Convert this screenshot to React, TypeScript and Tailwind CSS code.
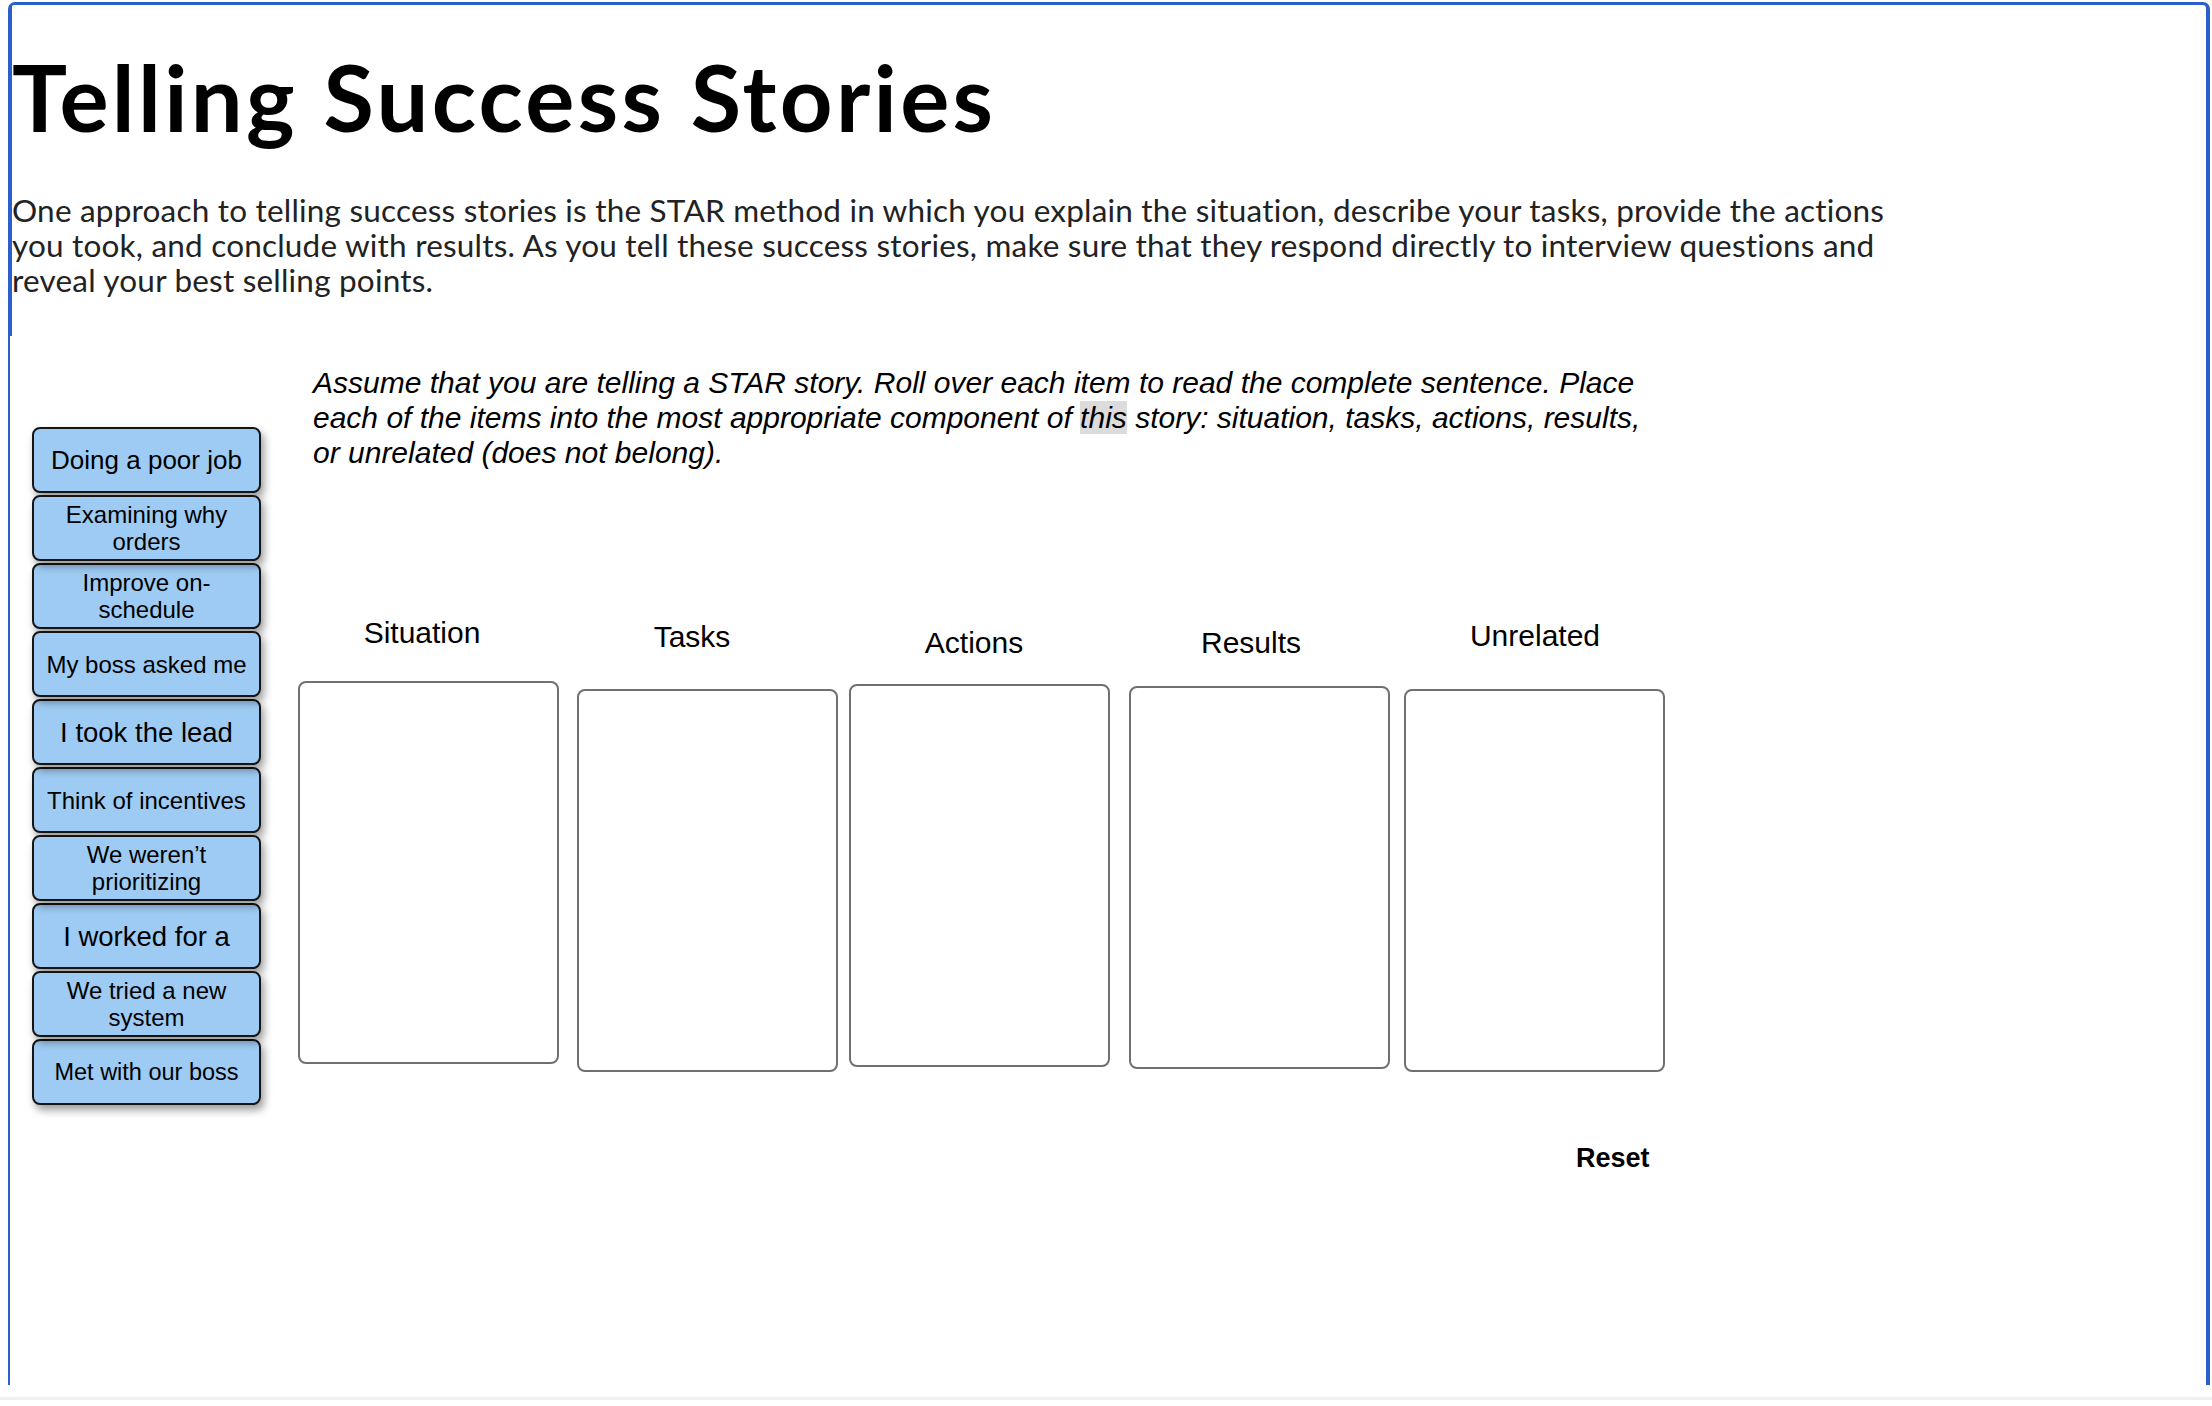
const items = [
  { text: "Doing a poor job", size: "text-[26px]", z: "z-[1]" },
  { text: "Examining why orders", size: "text-[24px]", z: "z-[2]" },
  { text: "Improve on-schedule", size: "text-[24px]", z: "z-[1]" },
  { text: "My boss asked me", size: "text-[24px]", z: "z-[3]" },
  { text: "I took the lead", size: "text-[27.5px]", z: "z-[2]" },
  { text: "Think of incentives", size: "text-[24px]", z: "z-[1]" },
  { text: "We weren’t prioritizing", size: "text-[24px]", z: "z-[3]" },
  { text: "I worked for a", size: "text-[27.5px]", z: "z-[2]" },
  { text: "We tried a new system", size: "text-[24px]", z: "z-[3]" },
  { text: "Met with our boss", size: "text-[23.5px]", z: "z-[2]" },
];

const labels = [
  { text: "Situation", cls: "ml-[26px] mt-0" },
  { text: "Tasks", cls: "ml-[70px] mt-[4px]" },
  { text: "Actions", cls: "ml-[82px] mt-[10px]" },
  { text: "Results", cls: "ml-[77px] mt-[10px]" },
  { text: "Unrelated", cls: "ml-[84px] mt-[3px]" },
];

const boxes = [
  "ml-[2px] mt-0",
  "ml-[18px] mt-[8px]",
  "ml-[11px] mt-[3px]",
  "ml-[19px] mt-[5px]",
  "ml-[14px] mt-[8px]",
];

const DragItem = ({ text, size, z }: { text: string; size: string; z: string }) => (
  <div
    className={`relative ${z} flex h-[66px] w-[229px] items-center justify-center rounded-[8px] border-2 border-[#151515] bg-[#9ecbf4] px-2 text-center leading-[27px] text-black shadow-[3px_5px_9px_rgba(0,0,0,0.4)] ${size}`}
  >
    {text}
  </div>
);

export default function App() {
  return (
    <div className="relative h-[1406px] w-[2212px] overflow-hidden bg-white">
      <div className="ml-[8px] mt-[2px] h-[1383px] w-[2202px] rounded-t-[7px] border-t-[3px] border-r-[4px] border-l-2 border-b-0 border-[#2b5fcb]">
        {/* page header */}
        <div className="h-[331px] border-l-2 border-[#2b5fcb] font-['Lato','Open_Sans',sans-serif]">
          <h1 className="pt-[46px] text-[92px] font-bold leading-[92px] tracking-[3.3px] text-black">
            Telling Success Stories
          </h1>
          <p className="mt-[50px] w-[1900px] text-[31.5px] leading-[35px] tracking-[0.2px] text-[#222]">
            One approach to telling success stories is the STAR method in which you explain the situation, describe your
            tasks, provide the actions you took, and conclude with results. As you tell these success stories, make sure
            that they respond directly to interview questions and reveal your best selling points.
          </p>
        </div>

        {/* drag and drop activity */}
        <div className="flex font-['Liberation_Sans','Arial',sans-serif] text-black">
          <div className="ml-[22px] mt-[91px] flex flex-col gap-[2px]">
            {items.map((item) => (
              <DragItem key={item.text} {...item} />
            ))}
          </div>

          <div className="ml-[35px] mt-[29px] flex flex-col">
            <p className="ml-[17px] w-[1340px] text-[30px] italic leading-[35px]">
              Assume that you are telling a STAR story. Roll over each item to read the complete sentence. Place each of
              the items into the most appropriate component of <span className="bg-[#dcdcdc]">this</span> story:
              situation, tasks, actions, results, or unrelated (does not belong).
            </p>

            <div className="mt-[145px] flex h-[66px] items-start">
              {labels.map((l) => (
                <div key={l.text} className={`w-[200px] text-center text-[30px] leading-[35px] ${l.cls}`}>
                  {l.text}
                </div>
              ))}
            </div>

            <div className="flex items-start">
              {boxes.map((cls, i) => (
                <div key={i} className={`h-[383px] w-[261px] rounded-[8px] border-2 border-[#707070] bg-white ${cls}`} />
              ))}
            </div>

            <div className="ml-[1280px] mt-[71px] text-[27px] font-bold leading-[31px]">Reset</div>
          </div>
        </div>
      </div>
      <div className="mt-[12px] h-[3px] w-full bg-[#f0f0f0]" />
    </div>
  );
}
